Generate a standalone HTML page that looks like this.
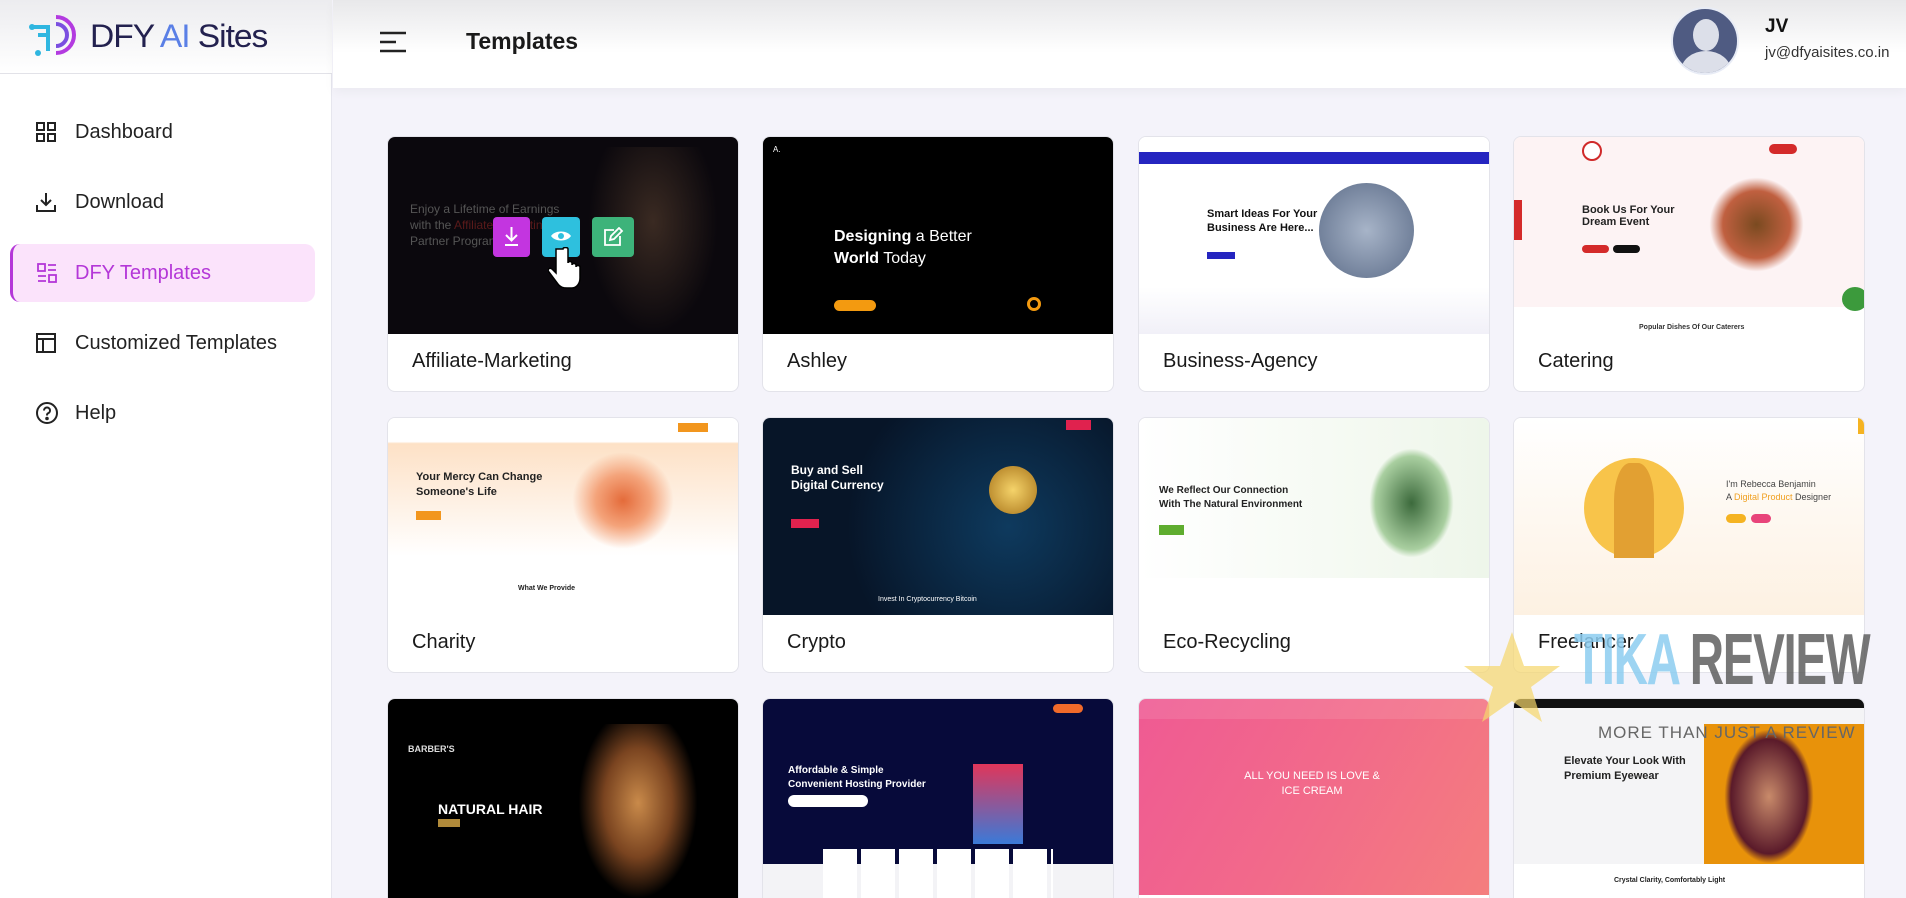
<!DOCTYPE html>
<html><head><meta charset="utf-8"><style>
*{box-sizing:border-box;margin:0;padding:0}
html{overflow:hidden;width:1906px;height:898px}
body{width:1906px;height:898px;overflow:hidden;font-family:"Liberation Sans",sans-serif;background:#f4f3fa;position:relative;color:#111}
.side{position:absolute;left:0;top:0;width:332px;height:898px;background:#fff;border-right:1px solid #e6e6ee}
.logo{position:absolute;left:0;top:0;width:332px;height:74px;background:linear-gradient(#ececef,#fff);border-bottom:1px solid #e2e2e8}
.nav{position:absolute;left:0;width:332px;height:58px;display:flex;align-items:center;font-size:20px;color:#222}
.nav svg{position:absolute;left:35px}
.nav span{position:absolute;left:75px}
.act{left:10px!important;width:305px!important;background:#fbe3fb;border-left:3px solid #b437d8;border-radius:10px;color:#b437d8}
.top{position:absolute;left:333px;top:0;right:0;height:88px;background:linear-gradient(#e8e8ea,#fff 60%);box-shadow:0 4px 10px rgba(0,0,0,.04)}
.card{position:absolute;width:352px;height:256px;background:#fff;border:1px solid #e3e3ea;border-radius:8px;overflow:hidden}
.th{position:absolute;left:0;top:0;width:100%;height:197px;overflow:hidden}
.lb{position:absolute;left:24px;top:213px;font-size:20px;color:#1a1a1a}
.t{position:absolute;white-space:nowrap}
</style></head><body>
<div class="side">
 <div class="logo">
  <svg width="60" height="46" style="position:absolute;left:26px;top:13px" viewBox="0 0 60 46"><path d="M30 4a18 18 0 0 1 0 36" stroke="#b33be0" stroke-width="4" fill="none"/><path d="M30 11a11 11 0 0 1 0 22" stroke="#7b4fe0" stroke-width="4" fill="none"/><path d="M6 14h16v24M12 22h10" stroke="#2fb6e0" stroke-width="4" fill="none"/><circle cx="6" cy="14" r="3" fill="#2fb6e0"/><circle cx="12" cy="40" r="3" fill="#2fb6e0"/></svg>
  <div class="t" style="left:90px;top:18px;font-size:32px;letter-spacing:-1px;color:#23214f;transform:scaleX(1.05);transform-origin:left">DFY <span style="color:#5a7fe6">AI</span> Sites</div>
 </div>
 <div class="nav" style="top:103px"><svg width="22" height="22" viewBox="0 0 22 22" fill="none" stroke="#222" stroke-width="2"><rect x="2" y="2" width="7" height="7"/><rect x="13" y="2" width="7" height="7"/><rect x="2" y="13" width="7" height="7"/><rect x="13" y="13" width="7" height="7"/></svg><span>Dashboard</span></div>
 <div class="nav" style="top:173px"><svg width="22" height="22" viewBox="0 0 22 22" fill="none" stroke="#222" stroke-width="2"><path d="M11 2v12M6 9l5 5 5-5M2 14v6h18v-6"/></svg><span>Download</span></div>
 <div class="nav act" style="top:244px"><svg width="22" height="22" viewBox="0 0 22 22" fill="none" stroke="#b437d8" stroke-width="1.8" style="left:23px"><rect x="2" y="2" width="7" height="7"/><rect x="13" y="13" width="7" height="7"/><path d="M12 3h8M12 8h8M2 14h8M2 19h8"/></svg><span style="left:62px">DFY Templates</span></div>
 <div class="nav" style="top:314px"><svg width="22" height="22" viewBox="0 0 22 22" fill="none" stroke="#222" stroke-width="2"><rect x="2" y="2" width="18" height="18"/><path d="M2 7h18M8 7v13"/></svg><span>Customized Templates</span></div>
 <div class="nav" style="top:384px"><svg width="24" height="24" viewBox="0 0 24 24" fill="none" stroke="#222" stroke-width="2"><circle cx="12" cy="12" r="10"/><path d="M9 9.5a3 3 0 1 1 4 2.8c-1 .4-1 1.2-1 2.2"/><circle cx="12" cy="17.5" r=".8" fill="#222"/></svg><span>Help</span></div>
</div>
<div class="top">
 <svg width="28" height="22" style="position:absolute;left:47px;top:31px" viewBox="0 0 28 22" stroke="#222" stroke-width="2.4"><path d="M0 2h26M0 11h16M0 20h26"/></svg>
 <div class="t" style="left:133px;top:28px;font-size:23px;font-weight:bold;color:#1a1a1a">Templates</div>
 <div style="position:absolute;left:1338px;top:7px;width:68px;height:68px;border-radius:50%;background:#4f5b82;overflow:hidden;border:2px solid #e8ecf6"><div style="position:absolute;left:20px;top:10px;width:26px;height:32px;border-radius:50%;background:#dcdfe9"></div><div style="position:absolute;left:8px;top:42px;width:50px;height:40px;border-radius:50% 50% 0 0;background:#dcdfe9"></div></div>
 <div class="t" style="left:1432px;top:16px;font-size:19px;font-weight:bold">JV</div>
 <div class="t" style="left:1432px;top:44px;font-size:15px;color:#333">jv@dfyaisites.co.in</div>
</div>

<!-- Row 1 -->
<div class="card" style="left:387px;top:136px"><div class="th" style="background:#0b080d">
 <div class="t" style="left:22px;top:64px;font-size:12px;color:#555;line-height:16px">Enjoy a Lifetime of Earnings<br>with the <span style="color:#5a1a1a">Affiliate Marketing</span><br>Partner Program!</div>
 <div style="position:absolute;left:200px;top:10px;width:130px;height:187px;background:radial-gradient(ellipse at 50% 40%,#3a2a22,#0b080d 70%)"></div>
 <div style="position:absolute;left:105px;top:80px;width:37px;height:40px;background:#c335e0;border-radius:4px"></div>
 <svg style="position:absolute;left:115px;top:88px" width="17" height="22" viewBox="0 0 17 22" stroke="#fff" stroke-width="2" fill="none"><path d="M8.5 2v13M3 10l5.5 5.5L14 10M2 20h13"/></svg>
 <div style="position:absolute;left:154px;top:80px;width:38px;height:40px;background:#2ec0de;border-radius:4px"></div>
 <svg style="position:absolute;left:162px;top:92px" width="22" height="14" viewBox="0 0 22 14"><path d="M1 7C5 1 17 1 21 7 17 13 5 13 1 7z" fill="#fff"/><circle cx="11" cy="7" r="3" fill="#2ec0de"/></svg>
 <div style="position:absolute;left:204px;top:80px;width:42px;height:40px;background:#3db37a;border-radius:4px"></div>
 <svg style="position:absolute;left:214px;top:90px" width="22" height="20" viewBox="0 0 22 20" stroke="#fff" stroke-width="1.8" fill="none"><path d="M12 3H3v15h15V9M8 13l1-4 8-8 3 3-8 8z"/></svg>
 <svg style="position:absolute;left:160px;top:110px" width="34" height="42" viewBox="0 0 34 42"><path d="M8 2v24l-4-4c-3-2-5 1-3 3l9 12c2 3 5 4 9 4h5c5 0 8-5 8-10V20c0-2-4-2-4 0v-2c0-2-4-2-4 0v-2c0-2-4-2-4 0V2c0-2-5-2-5 0z" fill="#fff" stroke="#000" stroke-width="1.5"/></svg>
</div><div class="lb">Affiliate-Marketing</div></div>

<div class="card" style="left:762px;top:136px"><div class="th" style="background:#000">
 <div class="t" style="left:10px;top:8px;font-size:8px;color:#fff">A.</div>
 <div class="t" style="left:71px;top:89px;font-size:16px;color:#fff;line-height:22px"><b>Designing</b> a Better<br><b>World</b> Today</div>
 <div style="position:absolute;left:71px;top:163px;width:42px;height:11px;border-radius:6px;background:#f39a10"></div>
 <div style="position:absolute;left:264px;top:160px;width:14px;height:14px;border-radius:50%;border:3px solid #f39a10"></div>
</div><div class="lb">Ashley</div></div>

<div class="card" style="left:1138px;top:136px"><div class="th" style="background:#fff">
 <div style="position:absolute;left:0;top:15px;width:100%;height:12px;background:#2525c0"></div>
 <div class="t" style="left:68px;top:70px;font-size:11px;font-weight:bold;color:#111;line-height:14px">Smart Ideas For Your<br>Business Are Here...</div>
 <div style="position:absolute;left:68px;top:115px;width:28px;height:7px;background:#2525c0"></div>
 <div style="position:absolute;left:180px;top:46px;width:95px;height:95px;border-radius:50%;background:radial-gradient(#a7b4c8,#5c6c88)"></div>
 <div style="position:absolute;left:0;top:150px;width:100%;height:47px;background:linear-gradient(#fff,#f1f0f8)"></div>
</div><div class="lb">Business-Agency</div></div>

<div class="card" style="left:1513px;top:136px"><div class="th" style="background:#fdf3f4">
 <div style="position:absolute;left:68px;top:4px;width:20px;height:20px;border-radius:50%;border:2px solid #d02a2a;background:#fff"></div>
 <div style="position:absolute;left:255px;top:7px;width:28px;height:10px;border-radius:5px;background:#d42a2a"></div>
 <div style="position:absolute;left:0;top:63px;width:8px;height:40px;background:#d42a2a"></div>
 <div class="t" style="left:68px;top:67px;font-size:11px;font-weight:bold;line-height:12px;color:#222">Book Us For Your<br>Dream Event</div>
 <div style="position:absolute;left:68px;top:108px;width:27px;height:8px;border-radius:4px;background:#d42a2a"></div>
 <div style="position:absolute;left:99px;top:108px;width:27px;height:8px;border-radius:4px;background:#111"></div>
 <div style="position:absolute;left:195px;top:40px;width:95px;height:95px;background:radial-gradient(#7a4a20,#c06040 50%,transparent 70%)"></div>
 <div style="position:absolute;left:0;top:170px;width:100%;height:27px;background:#fff"></div>
 <div class="t" style="left:125px;top:187px;font-size:7px;font-weight:bold;color:#333">Popular Dishes Of Our Caterers</div>
 <div style="position:absolute;left:328px;top:150px;width:26px;height:24px;border-radius:50%;background:#3c9a3c"></div>
</div><div class="lb">Catering</div></div>

<!-- Row 2 -->
<div class="card" style="left:387px;top:417px"><div class="th" style="background:linear-gradient(#fff 0,#fff 12%,#fde1c6 13%,#fff 70%)">
 <div class="t" style="left:28px;top:52px;font-size:11px;font-weight:bold;line-height:15px;color:#222">Your Mercy Can Change<br>Someone's Life</div>
 <div style="position:absolute;left:28px;top:93px;width:25px;height:9px;background:#f2961e"></div>
 <div style="position:absolute;left:290px;top:5px;width:30px;height:9px;background:#f2961e"></div>
 <div style="position:absolute;left:180px;top:30px;width:110px;height:105px;background:radial-gradient(#e46b3a 0,#f4a37a 35%,transparent 65%)"></div>
 <div class="t" style="left:130px;top:167px;font-size:7px;font-weight:bold;color:#222">What We Provide</div>
</div><div class="lb">Charity</div></div>

<div class="card" style="left:762px;top:417px"><div class="th" style="background:radial-gradient(circle at 70% 55%,#0e3a5e,#071528 60%)">
 <div style="position:absolute;left:303px;top:2px;width:25px;height:10px;background:#e0224e"></div>
 <div class="t" style="left:28px;top:45px;font-size:12px;font-weight:bold;line-height:15px;color:#fff">Buy and Sell<br>Digital Currency</div>
 <div style="position:absolute;left:28px;top:101px;width:28px;height:9px;background:#e0224e"></div>
 <div style="position:absolute;left:226px;top:48px;width:48px;height:48px;border-radius:50%;background:radial-gradient(#f5d36a,#a8741a)"></div>
 <div class="t" style="left:115px;top:178px;font-size:7px;color:#fff">Invest In Cryptocurrency Bitcoin</div>
</div><div class="lb">Crypto</div></div>

<div class="card" style="left:1138px;top:417px"><div class="th" style="background:linear-gradient(90deg,#fff,#eef6ea)">
 <div class="t" style="left:20px;top:66px;font-size:10px;font-weight:bold;line-height:14px;color:#222">We Reflect Our Connection<br>With The Natural Environment</div>
 <div style="position:absolute;left:20px;top:107px;width:25px;height:10px;background:#5fad2f"></div>
 <div style="position:absolute;left:230px;top:30px;width:85px;height:110px;border-radius:40%;background:radial-gradient(#3c6a3c,#a9cfa0 60%,transparent 70%)"></div>
 <div style="position:absolute;left:0;top:160px;width:100%;height:37px;background:#fff"></div>
</div><div class="lb">Eco-Recycling</div></div>

<div class="card" style="left:1513px;top:417px"><div class="th" style="background:linear-gradient(#fff,#fdf1e2)">
 <div style="position:absolute;left:344px;top:0;width:8px;height:16px;background:#f5b322"></div>
 <div style="position:absolute;left:70px;top:40px;width:100px;height:100px;border-radius:50%;background:#f8c44a"></div>
 <div style="position:absolute;left:100px;top:45px;width:40px;height:95px;border-radius:40% 40% 0 0;background:#e2a032"></div>
 <div class="t" style="left:212px;top:60px;font-size:9px;color:#444;line-height:13px">I'm Rebecca Benjamin<br>A <span style="color:#f0a020">Digital Product</span> Designer</div>
 <div style="position:absolute;left:212px;top:96px;width:20px;height:9px;border-radius:5px;background:#f5b322"></div>
 <div style="position:absolute;left:237px;top:96px;width:20px;height:9px;border-radius:5px;background:#e8447a"></div>
</div><div class="lb">Freelancer</div></div>

<!-- Row 3 -->
<div class="card" style="left:387px;top:698px;height:200px;border-bottom:0;border-radius:8px 8px 0 0"><div class="th" style="background:#000;height:200px">
 <div class="t" style="left:20px;top:45px;font-size:9px;font-weight:bold;color:#ddd">BARBER'S</div>
 <div class="t" style="left:50px;top:102px;font-size:14px;font-weight:bold;color:#fff">NATURAL HAIR</div>
 <div style="position:absolute;left:50px;top:120px;width:22px;height:8px;background:#b08a3a"></div>
 <div style="position:absolute;left:190px;top:25px;width:120px;height:175px;background:radial-gradient(ellipse at 50% 45%,#c98a4a,#7a4420 40%,#000 70%)"></div>
</div></div>

<div class="card" style="left:762px;top:698px;height:200px;border-bottom:0;border-radius:8px 8px 0 0"><div class="th" style="background:#070a3a;height:200px">
 <div style="position:absolute;left:290px;top:5px;width:30px;height:9px;border-radius:5px;background:#f06a2a"></div>
 <div class="t" style="left:25px;top:65px;font-size:10px;font-weight:bold;line-height:14px;color:#fff">Affordable &amp; Simple<br>Convenient Hosting Provider</div>
 <div style="position:absolute;left:25px;top:96px;width:80px;height:12px;border-radius:6px;background:#fff"></div>
 <div style="position:absolute;left:210px;top:65px;width:50px;height:80px;background:linear-gradient(#e0365a,#3a7ad8)"></div>
 <div style="position:absolute;left:0;top:165px;width:100%;height:35px;background:#f3f3f6"></div>
 <div style="position:absolute;left:60px;top:150px;width:230px;height:50px;background:repeating-linear-gradient(90deg,#fff 0 34px,transparent 34px 38px)"></div>
</div></div>

<div class="card" style="left:1138px;top:698px;height:200px;border-bottom:0;border-radius:8px 8px 0 0"><div class="th" style="background:linear-gradient(120deg,#ef5a93,#f26a8a 50%,#f47e7e);height:196px">
 <div class="t" style="left:83px;top:70px;font-size:11px;color:#fff;text-align:center;line-height:15px;width:180px">ALL YOU NEED IS LOVE &amp;<br>ICE CREAM</div>
 <div style="position:absolute;left:0;top:0;width:100%;height:20px;background:rgba(255,255,255,.1)"></div>
</div></div>

<div class="card" style="left:1513px;top:698px;height:200px;border-bottom:0;border-radius:8px 8px 0 0"><div class="th" style="background:#f4f4f6;height:165px">
 <div style="position:absolute;left:0;top:0;width:100%;height:9px;background:#111"></div>
 <div style="position:absolute;left:190px;top:25px;width:162px;height:140px;background:#e8920a"></div>
 <div style="position:absolute;left:210px;top:30px;width:90px;height:135px;border-radius:40% 40% 0 0;background:radial-gradient(#c88a6a,#5a1a2a 60%,transparent 70%)"></div>
 <div class="t" style="left:50px;top:55px;font-size:11px;font-weight:bold;line-height:15px;color:#222">Elevate Your Look With<br>Premium Eyewear</div>
</div><div class="t" style="left:100px;top:178px;font-size:7px;font-weight:bold;color:#222">Crystal Clarity, Comfortably Light</div></div>

<!-- watermark -->
<svg style="position:absolute;left:1462px;top:630px" width="100" height="100" viewBox="0 0 100 100"><path d="M50 2l12 34h36l-29 21 11 35-30-21-30 21 11-35L2 36h36z" fill="#f5d56a" opacity=".7"/></svg>
<div class="t" style="left:1574px;top:620px;font-size:72px;font-weight:bold;letter-spacing:-2px;transform:scaleX(.66);transform-origin:left;line-height:80px"><span style="color:#8ccdf0;opacity:.85">TIKA</span> <span style="color:#555;opacity:.8">REVIEW</span></div>
<div class="t" style="left:1598px;top:723px;font-size:17px;color:#666;letter-spacing:1px">MORE THAN JUST A REVIEW</div>
</body></html>
